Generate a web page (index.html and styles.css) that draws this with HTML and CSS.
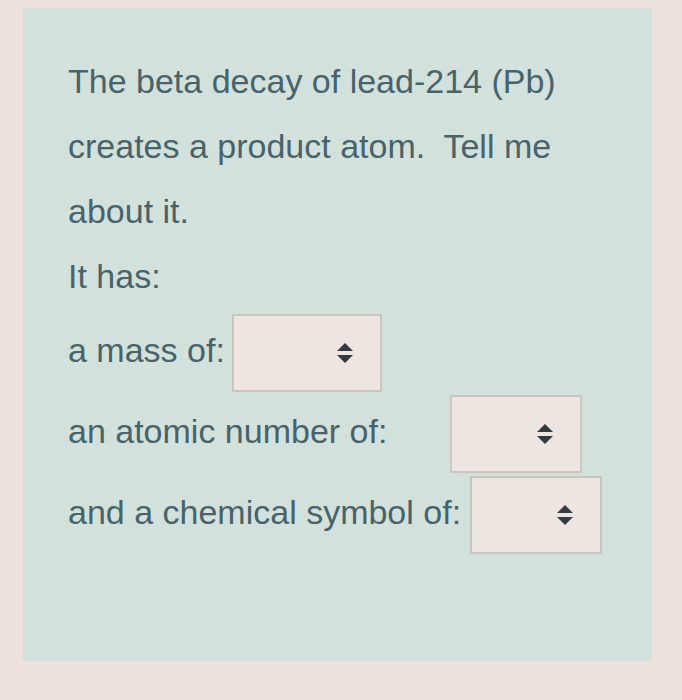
FILE: index.html
```html
<!DOCTYPE html>
<html lang="en">
<head>
  <meta charset="UTF-8">
  <title>Beta decay</title>
  <meta name="viewport" content="width=device-width, initial-scale=1.0">
  <link rel="stylesheet" href="styles.css">
</head>
<body>
  <div class="panel">
    <p class="question">The beta decay of lead-214 (Pb)<br>creates a product atom.&nbsp; Tell me<br>about it.</p>
    <p class="question">It has:</p>

    <!-- one row per answer, each with its own dropdown -->
    <div class="fields">
      <div class="field field--mass">
        <span class="label">a mass of:</span>
        <span class="picker picker--wide">
          <svg class="arrows" width="16" height="20" viewBox="0 0 16 20"><path d="M8 0 L16 8 L0 8 Z M0 12 L16 12 L8 20 Z"/></svg>
        </span>
      </div>
      <div class="field field--number">
        <span class="label">an atomic number of:</span>
        <span class="picker">
          <svg class="arrows" width="16" height="20" viewBox="0 0 16 20"><path d="M8 0 L16 8 L0 8 Z M0 12 L16 12 L8 20 Z"/></svg>
        </span>
      </div>
      <div class="field field--symbol">
        <span class="label">and a chemical symbol of:</span>
        <span class="picker">
          <svg class="arrows" width="16" height="20" viewBox="0 0 16 20"><path d="M8 0 L16 8 L0 8 Z M0 12 L16 12 L8 20 Z"/></svg>
        </span>
      </div>
    </div>
  </div>
</body>
</html>
```

FILE: styles.css
```css
/* Tarjeta de la pregunta sobre el fondo claro */
body {
  margin: 0;
  background: #ece1dd;
  font-family: "Liberation Sans", Arial, sans-serif;
}

.panel {
  box-sizing: border-box;
  margin: 8px 30px 0 23px;
  height: 653px;
  padding: 41px 20px 0 45px;
  background: #d3e1dc;
  color: #48646a;
  font-size: 34px;
}

.question {
  margin: 0;
  line-height: 65px;
}

.fields {
  margin-top: 5px;
}

.field {
  line-height: 65px;
  margin-bottom: 3px;
  white-space: nowrap;
}

.label {
  display: inline-block;
}

/* cada fila coloca su selector en una columna distinta */
.field--mass .label { width: 155px; }
.field--number .label { width: 373px; }
.field--symbol .label { width: 393px; }

.picker {
  box-sizing: border-box;
  display: inline-flex;
  align-items: center;
  justify-content: flex-end;
  vertical-align: middle;
  width: 132px;
  height: 78px;
  padding-right: 27px;
  background: #ede5e1;
  border: 2px solid #c9c5c0;
}

.picker--wide {
  width: 150px;
}

.arrows {
  fill: #343b40;
}
```
